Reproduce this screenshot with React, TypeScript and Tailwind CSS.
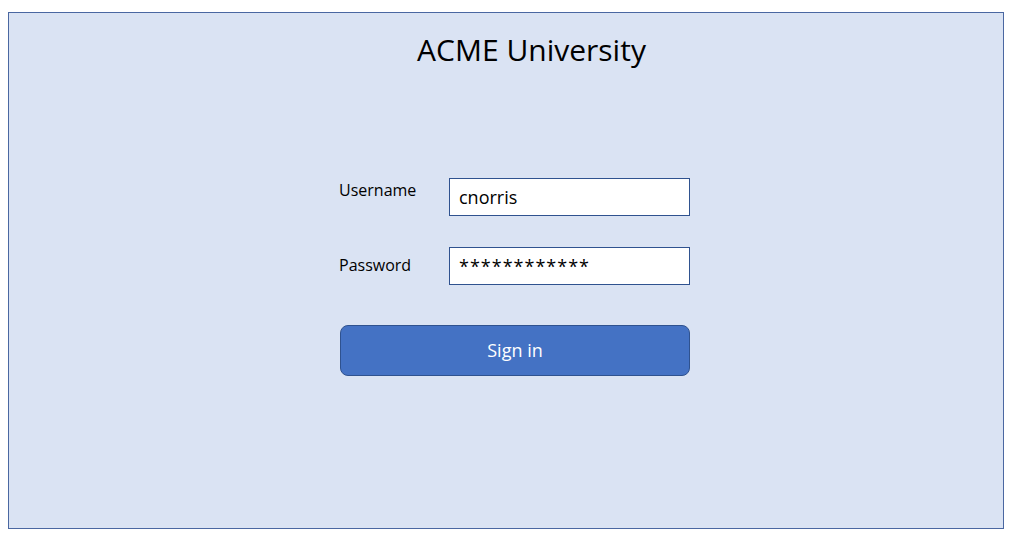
export default function App() {
  const font = { fontFamily: '"Open Sans", "Liberation Sans", sans-serif' }
  return (
    <div className="h-[537px] w-[1015px] bg-white pl-[8px] pt-[12px]" style={font}>
      <div className="flex h-[517px] w-[996px] flex-col border border-[#4a67a1] bg-[#dae3f3]">
        <h1 className="mt-[18px] pl-[51px] text-center text-[30px] leading-[38px] text-black">ACME University</h1>
        <form className="ml-[330px] mt-[109px] flex w-[351px] flex-col">
          <div className="flex items-start">
            <label className="mt-[1px] w-[110px] text-[16px] leading-[22px] text-black">Username</label>
            <div className="flex h-[38px] w-[241px] items-center border border-[#2f528f] bg-white pl-[9px] text-[18px] text-black">
              cnorris
            </div>
          </div>
          <div className="mt-[31px] flex items-center">
            <label className="mt-[-2px] w-[110px] text-[16px] leading-[22px] text-black">Password</label>
            <div className="flex h-[38px] w-[241px] items-center border border-[#2f528f] bg-white pl-[9px] text-[18px] tracking-[1px] text-black">
              ************
            </div>
          </div>
          <button
            type="button"
            className="ml-[1px] mt-[40px] flex h-[51px] w-[350px] items-center justify-center rounded-[8px] border border-[#2f528f] bg-[#4472c4] text-[18px] font-medium text-white"
          >
            Sign in
          </button>
        </form>
      </div>
    </div>
  )
}
